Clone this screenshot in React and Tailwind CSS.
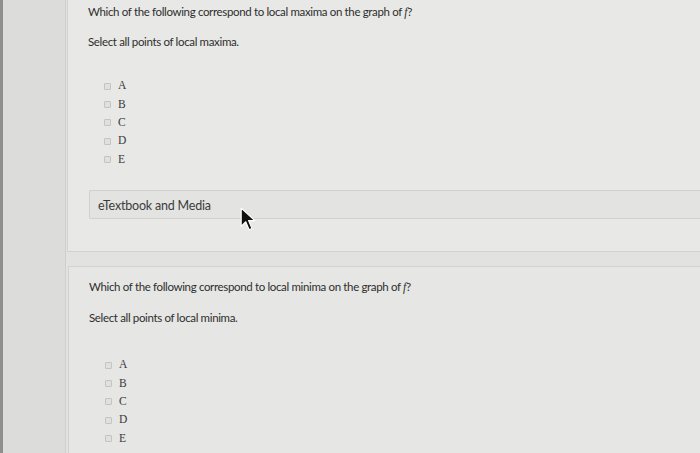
const options = ["A", "B", "C", "D", "E"];

const Option = ({ label }) => (
  <div className="flex items-center h-[18.3px]">
    <span className="w-[7px] h-[7px] border border-[#c4c4c2] bg-[#e0e0de] rounded-[1px]" />
    <span className="ml-[7px] text-[11.5px] text-[#3a3a3a] leading-none" style={{ fontFamily: '"Liberation Serif", serif' }}>
      {label}
    </span>
  </div>
);

const Cursor = () => (
  <svg className="absolute left-[240px] top-[207px]" width="16" height="25" viewBox="0 0 14 22">
    <path d="M1 1 L1 17 L5 13 L8 20 L10.5 19 L7.5 12 L13 12 Z" fill="#111" stroke="#fff" strokeWidth="1" strokeLinejoin="round" />
  </svg>
);

const F = () => <i style={{ fontFamily: '"Liberation Serif", serif' }}>f</i>;

export default function App() {
  return (
    <div
      className="relative flex h-[453px] w-[700px] overflow-hidden bg-[#dcdcda]"
      style={{ fontFamily: 'Lato, "Open Sans", sans-serif' }}
    >
      <div className="w-[3px] bg-[#8f8f8d]" />
      <div className="w-[63px] border-r border-[#cfcfcd]" />
      <div className="flex-1 flex flex-col bg-[#e2e2e0]">
        <div className="h-[252px] ml-[1px] border-l border-b border-[#d2d2d0] bg-[#e8e8e6] pl-[20px] pt-[4px]">
          <p className="text-[11.5px] leading-[15px] text-[#2e2e2e] tracking-[-0.35px]">
            Which of the following correspond to local maxima on the graph of <F />?
          </p>
          <p className="mt-[14px] text-[11.5px] leading-[15px] text-[#2e2e2e] tracking-[-0.35px]">
            Select all points of local maxima.
          </p>
          <div className="mt-[28px] ml-[16px] flex flex-col">
            {options.map((o) => (
              <Option key={o} label={o} />
            ))}
          </div>
          <div className="mt-[22px] ml-[1px] h-[29px] flex items-center border border-r-0 border-[#d0d0ce] bg-[#e3e3e1] rounded-l-[2px] pl-[8px] pt-[3px]">
            <span className="text-[12.5px] text-[#3c3c3c] tracking-[-0.2px]">eTextbook and Media</span>
          </div>
        </div>
        <div className="h-[14px]" />
        <div className="flex-1 ml-[2px] border-l border-t border-[#d2d2d0] bg-[#e6e6e4] pl-[20px] pt-[12px]">
          <p className="text-[11.5px] leading-[15px] text-[#2e2e2e] tracking-[-0.35px]">
            Which of the following correspond to local minima on the graph of <F />?
          </p>
          <p className="mt-[15px] text-[11.5px] leading-[15px] text-[#2e2e2e] tracking-[-0.35px]">
            Select all points of local minima.
          </p>
          <div className="mt-[31px] ml-[16px] flex flex-col">
            {options.map((o) => (
              <Option key={o} label={o} />
            ))}
          </div>
        </div>
      </div>
      <Cursor />
    </div>
  );
}
